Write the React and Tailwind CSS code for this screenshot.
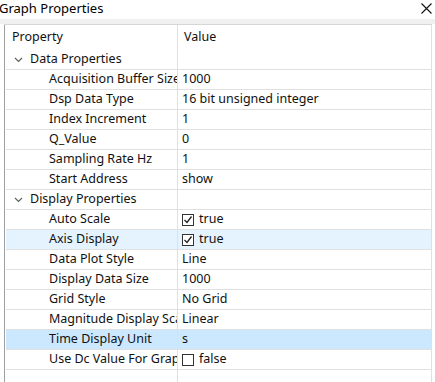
import React from 'react';

const sections = [
  {
    title: 'Data Properties',
    rows: [
      { name: 'Acquisition Buffer Size', value: '1000' },
      { name: 'Dsp Data Type', value: '16 bit unsigned integer' },
      { name: 'Index Increment', value: '1' },
      { name: 'Q_Value', value: '0' },
      { name: 'Sampling Rate Hz', value: '1' },
      { name: 'Start Address', value: 'show' },
    ],
  },
  {
    title: 'Display Properties',
    rows: [
      { name: 'Auto Scale', check: true, value: 'true' },
      { name: 'Axis Display', check: true, value: 'true', state: 'hover' },
      { name: 'Data Plot Style', value: 'Line' },
      { name: 'Display Data Size', value: '1000' },
      { name: 'Grid Style', value: 'No Grid' },
      { name: 'Magnitude Display Scale', value: 'Linear' },
      { name: 'Time Display Unit', value: 's', state: 'selected' },
      { name: 'Use Dc Value For Graph', check: false, value: 'false' },
    ],
  },
];

function Chevron() {
  return (
    <svg width="9" height="6" viewBox="0 0 9 6" className="shrink-0">
      <path d="M1 1 L4.5 4.5 L8 1" fill="none" stroke="#606060" strokeWidth="1.2" />
    </svg>
  );
}

function CheckBox({ checked }) {
  return (
    <span className="w-[12px] h-[12px] border border-[#333333] bg-white flex items-center justify-center shrink-0">
      {checked && (
        <svg width="10" height="10" viewBox="0 0 10 10">
          <path d="M1.5 5 L4 7.5 L8.5 1.5" fill="none" stroke="#222222" strokeWidth="1.3" />
        </svg>
      )}
    </span>
  );
}

function PropRow({ row }) {
  const bg =
    row.state === 'selected' ? 'bg-[#cce8ff]' : row.state === 'hover' ? 'bg-[#e5f3ff]' : 'bg-white';

  return (
    <div className={`flex h-[20px] border-b border-[#e0e0e0] ${bg}`}>
      <div className="w-[172px] shrink-0 border-r border-[#e0e0e0] pl-[43px] flex items-center overflow-hidden whitespace-nowrap">
        {row.name}
      </div>
      <div className="flex-1 pl-[4px] flex items-center gap-[5px] whitespace-nowrap overflow-hidden">
        {row.check !== undefined && <CheckBox checked={row.check} />}
        <span>{row.value}</span>
      </div>
    </div>
  );
}

export default function App() {
  return (
    <div
      className="w-[435px] h-[382px] bg-white overflow-hidden flex flex-col text-[12.5px] text-[#111111]"
      style={{ fontFamily: '"Noto Sans", "Noto Sans CJK SC", sans-serif' }}
    >
      {/* Title bar */}
      <div className="h-[19px] flex items-center justify-between pr-[3px] pb-[2px] shrink-0">
        <span className="-ml-[1px] text-[13px] text-black leading-none">Graph Properties</span>
        <svg width="11" height="11" viewBox="0 0 11 11">
          <path d="M0.5 0.5 L10.5 10.5 M10.5 0.5 L0.5 10.5" stroke="#111111" strokeWidth="1.1" />
        </svg>
      </div>
      <div className="h-[5px] bg-[#f0f0f0] shrink-0" />

      {/* Grid */}
      <div className="flex-1 flex ml-[4px] mr-[3px] border-t border-[#d6d6d6]">
        <div className="w-[1px] bg-[#a0a0a0]" />
        <div className="flex-1 ml-[1px] flex flex-col border-r border-[#e0e0e0]">
          <div className="flex h-[25px] shrink-0">
            <div className="w-[172px] border-r border-[#e0e0e0] pl-[6px] flex items-center">Property</div>
            <div className="flex-1 pl-[6px] flex items-center">Value</div>
          </div>

          {sections.map((section) => (
            <div key={section.title}>
              <div className="flex h-[20px] border-b border-[#e0e0e0]">
                <div className="w-[172px] shrink-0 border-r border-[#e0e0e0] pl-[8px] flex items-center gap-[7px]">
                  <Chevron />
                  <span>{section.title}</span>
                </div>
                <div className="flex-1" />
              </div>
              {section.rows.map((row) => (
                <PropRow key={row.name} row={row} />
              ))}
            </div>
          ))}

          <div className="flex-1 flex">
            <div className="w-[172px] border-r border-[#e0e0e0]" />
          </div>
        </div>
      </div>
    </div>
  );
}
